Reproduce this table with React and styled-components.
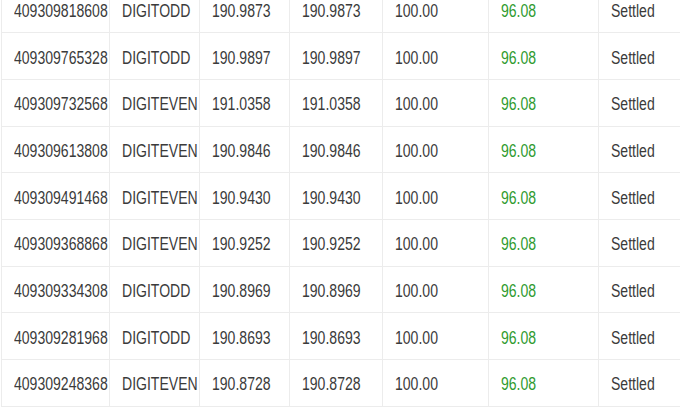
import React from 'react';
import styled, { createGlobalStyle } from 'styled-components';

const GlobalStyle = createGlobalStyle`
  html, body {
    margin: 0;
    padding: 0;
    background: #ffffff;
  }
`;

const Viewport = styled.div`
  width: 680px;
  height: 411px;
  overflow: hidden;
  background: #fff;
`;

const Table = styled.table`
  width: 679px;
  border-collapse: collapse;
  margin-top: -14px;
  margin-left: 1px;
  table-layout: fixed;
  font-family: "Liberation Sans", Arial, sans-serif;
  font-size: 18px;
  color: #3b3b3b;
`;

const Col = styled.col`
  width: ${props => props.$w}px;
`;

const Row = styled.tr`
  height: 46.7px;
  border-bottom: 1px solid #ececec;
`;

const Cell = styled.td`
  box-sizing: border-box;
  padding: 4px 0 0 12px;
  border-left: 1px solid #ececec;
  white-space: nowrap;
  overflow: hidden;
  color: ${props => (props.$green ? '#2f9b2f' : '#3b3b3b')};
`;

const Text = styled.span`
  display: inline-block;
  transform: scaleX(0.78);
  transform-origin: left center;
`;

const widths = [108, 90, 90, 93, 106, 110, 82];

const rows = [
  ['409309818608', 'DIGITODD', '190.9873', '190.9873'],
  ['409309765328', 'DIGITODD', '190.9897', '190.9897'],
  ['409309732568', 'DIGITEVEN', '191.0358', '191.0358'],
  ['409309613808', 'DIGITEVEN', '190.9846', '190.9846'],
  ['409309491468', 'DIGITEVEN', '190.9430', '190.9430'],
  ['409309368868', 'DIGITEVEN', '190.9252', '190.9252'],
  ['409309334308', 'DIGITODD', '190.8969', '190.8969'],
  ['409309281968', 'DIGITODD', '190.8693', '190.8693'],
  ['409309248368', 'DIGITEVEN', '190.8728', '190.8728'],
];

export default function App() {
  return (
    <>
      <GlobalStyle />
      <Viewport>
        <Table>
          <colgroup>
            {widths.map((w, i) => (
              <Col key={i} $w={w} />
            ))}
          </colgroup>
          <tbody>
            {rows.map((r) => {
              const cells = [...r, '100.00', '96.08', 'Settled'];
              return (
                <Row key={r[0]}>
                  {cells.map((c, i) => (
                    <Cell key={i} $green={i === 5}>
                      <Text>{c}</Text>
                    </Cell>
                  ))}
                </Row>
              );
            })}
          </tbody>
        </Table>
      </Viewport>
    </>
  );
}
